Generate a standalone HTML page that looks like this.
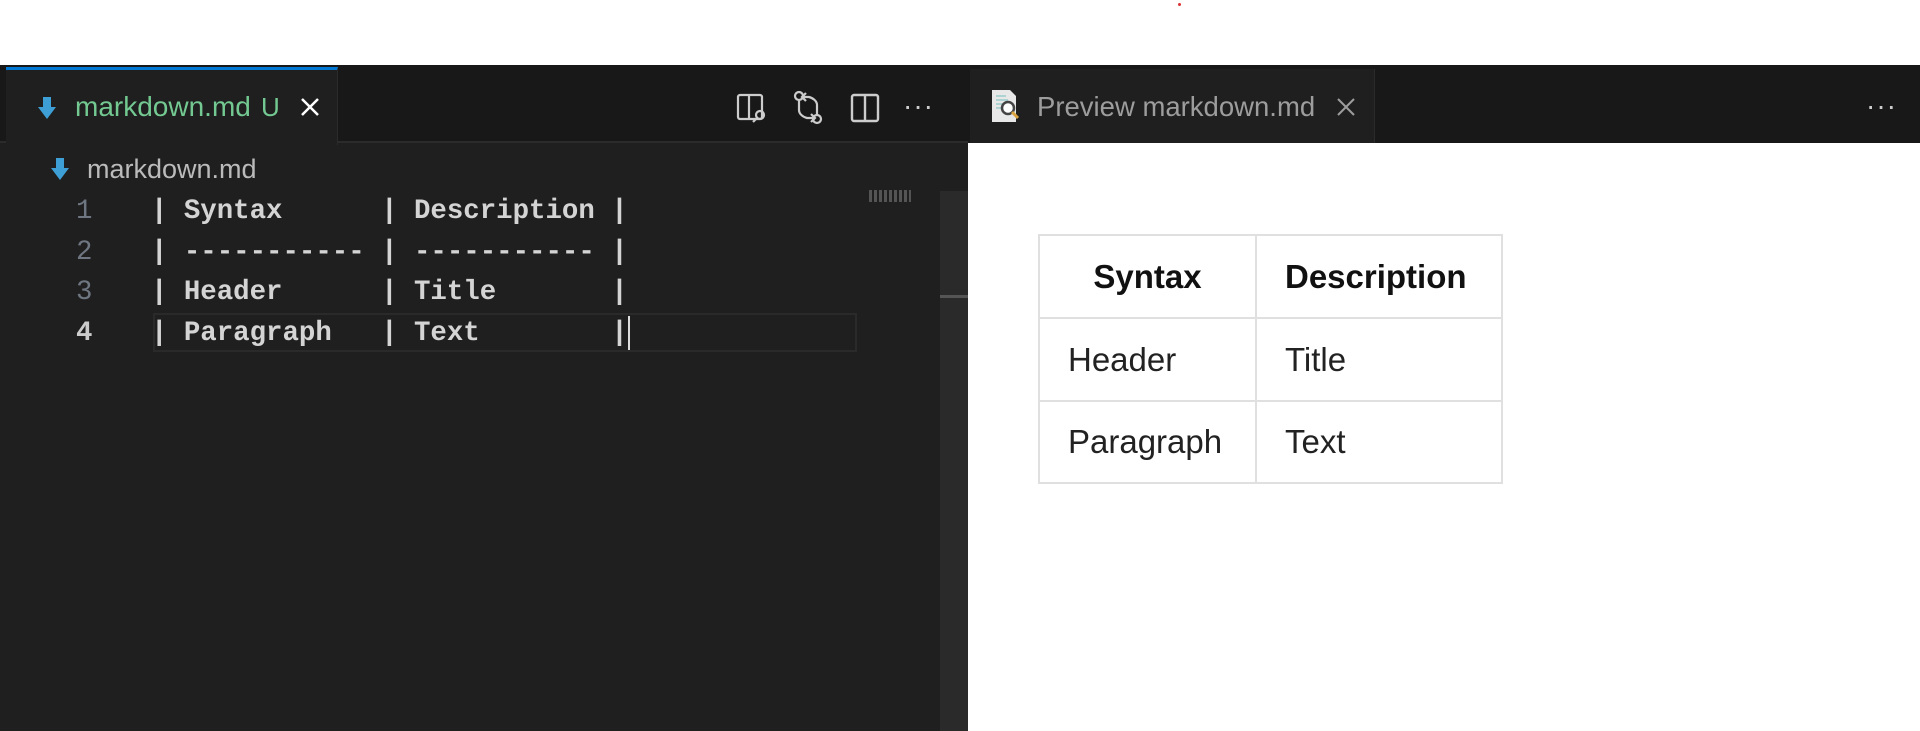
<!DOCTYPE html>
<html><head><meta charset="utf-8"><style>
*{margin:0;padding:0;box-sizing:border-box}
body{width:1920px;height:731px;overflow:hidden;background:#fff;position:relative;font-family:"Liberation Sans",sans-serif}
.abs{position:absolute}
.mono{font-family:"Liberation Mono",monospace;font-size:27.4px;color:#d4d4d4;white-space:pre;font-weight:bold}
</style></head><body>
<div class="abs" style="left:1178px;top:3px;width:3px;height:3px;background:#d33;border-radius:50%"></div>
<div class="abs" style="left:0;top:65px;width:968px;height:666px;background:#1f1f1f"></div>
<div class="abs" style="left:0;top:65px;width:968px;height:78px;background:#181818;border-bottom:2px solid #2b2b2b"></div>
<div class="abs" style="left:6px;top:67px;width:332px;height:78px;background:#1f1f1f;border-top:3px solid #0078d4;border-right:1px solid #2b2b2b"></div>
<svg class="abs" style="left:36px;top:95px" width="22" height="26" viewBox="0 0 22 26"><path d="M7 2h8v10h5L11 24 2 12h5z" fill="#3d9fd6"/></svg>
<div class="abs" style="left:75px;top:91px;font-size:28px;color:#73c991">markdown.md</div>
<div class="abs" style="left:261px;top:92px;font-size:26px;color:#73c991">U</div>
<svg class="abs" style="left:300px;top:97px" width="20" height="20"><path d="M2 2L18 18M18 2L2 18" stroke="#fff" stroke-width="2.5"/></svg>
<svg class="abs" style="left:736px;top:92px" width="32" height="32" viewBox="0 0 32 32" fill="none" stroke="#ccc" stroke-width="2.2"><rect x="2" y="3" width="24" height="24" rx="2"/><path d="M13 3v24"/><circle cx="24" cy="23" r="4"/><path d="M21 26l-4 4"/></svg>
<svg class="abs" style="left:792px;top:90px" width="32" height="36" viewBox="0 0 32 36" fill="none" stroke="#ccc" stroke-width="2.2"><circle cx="7" cy="6" r="4"/><path d="M7 10v10c0 4 4 7 8 8h8M19 24l4 4-4 4"/><circle cx="25" cy="29" r="4"/><path d="M25 25V15c0-4-4-7-8-8H10M14 3l-4 4 4 4"/></svg>
<svg class="abs" style="left:849px;top:92px" width="32" height="32" viewBox="0 0 32 32" fill="none" stroke="#ccc" stroke-width="2.4"><rect x="3" y="3" width="26" height="26" rx="2"/><path d="M16 3v26"/></svg>
<div class="abs" style="left:903px;top:90px;font-size:28px;color:#ccc;letter-spacing:1px">···</div>
<svg class="abs" style="left:49px;top:156px" width="22" height="26" viewBox="0 0 22 26"><path d="M7 2h8v10h5L11 24 2 12h5z" fill="#3d9fd6"/></svg>
<div class="abs" style="left:87px;top:154px;font-size:27px;color:#bbb">markdown.md</div>
<div class="abs" style="left:153px;top:313px;width:704px;height:39px;border:2px solid #2a2a2a"></div>
<div class="abs mono" style="left:76px;top:192px;line-height:40.5px;color:#6e7681;font-weight:normal">1
2
3
<span style="color:#ccc;font-weight:bold">4</span></div>
<div class="abs mono" style="left:151px;top:192px;line-height:40.5px">| Syntax      | Description |
| ----------- | ----------- |
| Header      | Title       |
| Paragraph   | Text        |</div>
<div class="abs" style="left:628px;top:316px;width:2px;height:34px;background:#ddd"></div>
<div class="abs" style="left:869px;top:190px;width:42px;height:12px;opacity:.5;background:repeating-linear-gradient(90deg,#888 0 3px,transparent 3px 5px)"></div>
<div class="abs" style="left:940px;top:191px;width:28px;height:540px;background:#2a2a2a"></div>
<div class="abs" style="left:940px;top:295px;width:28px;height:3px;background:#555"></div>
<div class="abs" style="left:968px;top:65px;width:952px;height:78px;background:#181818"></div>
<div class="abs" style="left:970px;top:69px;width:405px;height:74px;background:#1f1f1f;border-right:1px solid #2b2b2b"></div>
<svg class="abs" style="left:990px;top:88px" width="36" height="36" viewBox="0 0 36 36"><path d="M2 2h18l6 6v26H2z" fill="#e8e8e8"/><path d="M6 8h10M6 12h12M6 16h8M6 20h10" stroke="#9cc" stroke-width="1.5"/><circle cx="18" cy="20" r="6" fill="#fff" stroke="#444" stroke-width="2.5"/><path d="M22 24l6 6" stroke="#d9a441" stroke-width="3"/></svg>
<div class="abs" style="left:1037px;top:91px;font-size:27.5px;color:#9d9d9d">Preview markdown.md</div>
<svg class="abs" style="left:1336px;top:97px" width="20" height="20"><path d="M2 2L18 18M18 2L2 18" stroke="#9d9d9d" stroke-width="2"/></svg>
<div class="abs" style="left:1866px;top:90px;font-size:28px;color:#ccc;letter-spacing:1px">···</div>
<div class="abs" style="left:968px;top:143px;width:952px;height:588px;background:#fff"></div>
<table class="abs" style="left:1038px;top:234px;border-collapse:collapse;font-size:33px;color:#222;border:2px solid #d6d6d6">
<tr style="height:83px"><th style="width:217px;border:2px solid #e0e0e0;font-weight:bold;color:#111">Syntax</th><th style="width:246px;border:2px solid #e0e0e0;text-align:left;padding-left:28px;color:#111">Description</th></tr>
<tr style="height:83px"><td style="border:2px solid #e0e0e0;padding-left:28px">Header</td><td style="border:2px solid #e0e0e0;padding-left:28px">Title</td></tr>
<tr style="height:82px"><td style="border:2px solid #e0e0e0;padding-left:28px">Paragraph</td><td style="border:2px solid #e0e0e0;padding-left:28px">Text</td></tr>
</table>
</body></html>
